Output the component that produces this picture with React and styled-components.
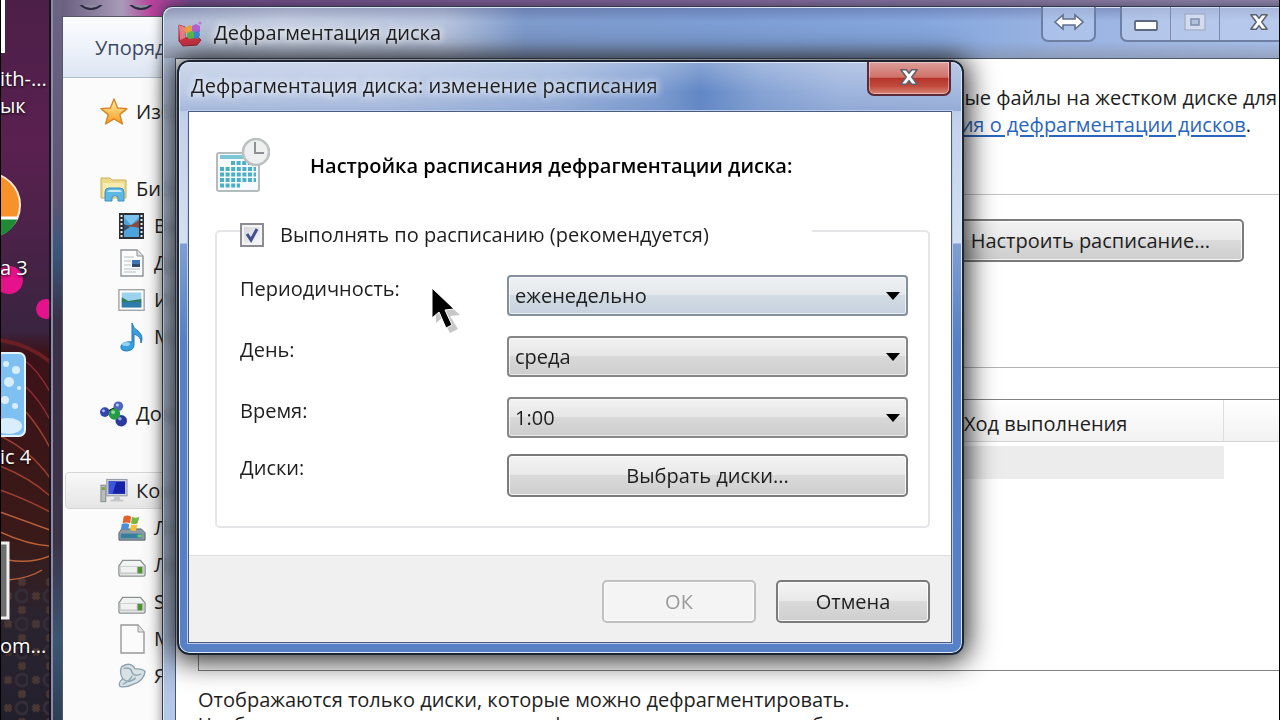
import { useState } from 'react';
import styled, { createGlobalStyle } from 'styled-components';

const days = ['понедельник', 'вторник', 'среда', 'четверг', 'пятница'];
const periods = ['ежедневно', 'еженедельно', 'ежемесячно'];
const times = ['0:00', '1:00', '2:00', '3:00'];

const StarIcon = () => (
  <svg width="28" height="28" viewBox="0 0 28 28">
    <defs>
      <linearGradient id="star" x1="0" y1="0" x2="0" y2="1">
        <stop offset="0" stopColor="#fff3a8" />
        <stop offset="1" stopColor="#f59a1c" />
      </linearGradient>
    </defs>
    <path
      d="M14 1 L17.6 10 L27 10.6 L19.8 16.6 L22.4 26 L14 20.8 L5.6 26 L8.2 16.6 L1 10.6 L10.4 10 Z"
      fill="url(#star)"
      stroke="#d98324"
      strokeWidth="1.4"
      strokeLinejoin="round"
    />
  </svg>
);

const LibraryIcon = () => (
  <svg width="28" height="28" viewBox="0 0 28 28">
    <path d="M1 3 h9 l2 2 h14 v18 h-25 z" fill="#ecd98a" stroke="#c9b25c" />
    <path d="M3 8 h21 v14 h-21 z" fill="#f7ebb0" />
    <path d="M5 26 v-9 q0 -4 4 -4 h11 q4 0 4 4 v9 h-6 v-4 q-3 -3 -6 0 v4 z" fill="#5fb8e4" stroke="#3c8fc4" />
    <path d="M7 17 q1 -2 3 -2 h9 q2 0 3 2 z" fill="#c7e9f8" />
  </svg>
);

const VideoIcon = () => (
  <svg width="28" height="28" viewBox="0 0 28 28">
    <rect x="1" y="1" width="25" height="26" fill="#2b2f36" />
    <rect x="6" y="3" width="15" height="22" fill="#4fa3dc" />
    <path d="M6 5 L13 13 L21 5 V3 H6 Z" fill="#7cc2ec" />
    <path d="M6 13 h15 l-7 2 z M12 14 l9 -6 v8 z" fill="#8a4a3c" />
    <path d="M6 12 l6 3 l-6 4 z" fill="#35506e" />
    <path d="M3.5 3 v23 M23.5 3 v23" stroke="#e8ecef" strokeWidth="2" strokeDasharray="2 2" />
  </svg>
);

const DocumentIcon = () => (
  <svg width="28" height="28" viewBox="0 0 28 28">
    <path d="M3 1 h16 l6 6 v20 h-22 z" fill="#fbfbfb" stroke="#8f9499" strokeWidth="1.4" />
    <path d="M19 1 v6 h6" fill="#dfe3e6" stroke="#8f9499" />
    <path d="M6 8 h10 M6 12 h7 M6 16 h7 M6 20 h16 M6 23 h12" stroke="#b4bcc9" />
    <rect x="14" y="11" width="8" height="7" fill="#3f77b5" />
    <rect x="14" y="15" width="8" height="3" fill="#2c4d6b" />
  </svg>
);

const PictureIcon = () => (
  <svg width="28" height="28" viewBox="0 0 30 28">
    <rect x="1" y="3" width="27" height="22" fill="#fdfdfd" stroke="#9a9fa4" strokeWidth="1.4" />
    <rect x="4" y="6" width="21" height="16" fill="#9bd2ee" />
    <path d="M4 11 l7 4 l14 -2 v4 h-21 z" fill="#2f7d58" />
    <path d="M4 16 h21 v6 h-21 z" fill="#2d7cab" />
  </svg>
);

const MusicIcon = () => (
  <svg width="28" height="30" viewBox="0 0 28 30">
    <path
      d="M14 1 q1 5 6 8 q6 5 3 12 q0 -7 -7 -9 v11 q0 5 -7 6 q-7 0 -6 -5 q2 -5 11 -4 z"
      fill="#38a0e0"
      stroke="#2479b4"
    />
    <ellipse cx="8" cy="22" rx="4" ry="2" fill="#92d3f5" />
  </svg>
);

const HomegroupIcon = () => (
  <svg width="28" height="28" viewBox="0 0 29 28">
    <path d="M5 12 L15 14 L19 5 M15 14 L22 21" stroke="#8ba8c4" strokeWidth="4" />
    <circle cx="5" cy="12" r="5" fill="#3445ad" />
    <circle cx="19" cy="6" r="5" fill="#4c67bd" />
    <circle cx="22" cy="21" r="6" fill="#2c3aa0" />
    <circle cx="15" cy="14" r="6" fill="#279a44" />
    <circle cx="3.6" cy="10.6" r="1.6" fill="#a9b6ee" />
    <circle cx="18" cy="4.6" r="1.6" fill="#bccdf2" />
    <circle cx="20.6" cy="19" r="1.8" fill="#97a4e6" />
    <circle cx="13.6" cy="12" r="2" fill="#93dca2" />
  </svg>
);

const ComputerIcon = () => (
  <svg width="28" height="28" viewBox="0 0 29 28">
    <rect x="1" y="8" width="5" height="17" fill="#b9bdb8" stroke="#85898a" />
    <rect x="2" y="10" width="3" height="3" fill="#79a63a" />
    <rect x="7" y="2" width="21" height="17" fill="#ced3da" stroke="#9096a0" />
    <rect x="9" y="4" width="17" height="13" fill="#1522a8" />
    <path d="M9 4 h8 l-4 13 h-4 z" fill="#3d55d8" />
    <path d="M15 19 h5 l1 4 h3 v2 h-13 v-2 h3 z" fill="#c3c7cb" />
  </svg>
);

const SystemDriveIcon = () => (
  <svg width="28" height="30" viewBox="0 0 30 30">
    <path d="M4 16 h21 l4 4 v8 h-28 v-8 z" fill="#8b9aa3" stroke="#56646c" />
    <rect x="3" y="21" width="22" height="5" fill="#377ea0" />
    <rect x="21" y="22" width="4" height="3" fill="#6bd06b" />
    <path d="M6 3 q4 -3 8 0 l-1 7 q-4 -2 -8 0 z" fill="#e2632b" />
    <path d="M15 3 q4 2 8 0 l-2 7 q-4 2 -7 0 z" fill="#7db544" />
    <path d="M4 11 q4 -2 8 0 l-1 6 q-4 -2 -8 0 z" fill="#4a8fd8" />
    <path d="M14 11 q3 2 7 0 l-2 7 q-3 1 -6 -1 z" fill="#f3c130" />
  </svg>
);

const DriveIcon = () => (
  <svg width="28" height="28" viewBox="0 0 30 28">
    <path d="M5 9 h19 l5 6 v9 q0 2 -2 2 h-24 q-2 0 -2 -2 v-9 z" fill="#f2f3f3" stroke="#8b8f90" strokeWidth="1.4" />
    <path d="M2 15 h26 v9 h-26 z" fill="#c9cccd" />
    <path d="M3 16 h17 v6 h-17 z" fill="#f1f1f1" />
    <rect x="21" y="16" width="5" height="7" fill="#4c9430" />
  </svg>
);

const FileIcon = () => (
  <svg width="28" height="30" viewBox="0 0 28 30">
    <path d="M3 1 h17 l6 7 v21 h-23 z" fill="#fbfbfb" stroke="#999" strokeWidth="1.4" />
    <path d="M20 1 v7 h6" fill="#e3e3e3" stroke="#999" />
  </svg>
);

const DishIcon = () => (
  <svg width="28" height="28" viewBox="0 0 30 28">
    <path d="M4 4 q10 -6 14 2 q8 0 11 3 q-1 10 -13 14 q-8 4 -14 2 q-2 -4 3 -8 q-4 -7 -1 -13 z" fill="#d7e1e6" stroke="#8ca0ab" strokeWidth="1.4" />
    <path d="M6 6 q8 -2 9 4 q1 5 10 2 M5 17 q6 6 14 -1 M5 23 q8 -4 10 -9" fill="none" stroke="#93a8b3" strokeWidth="1.6" />
  </svg>
);

const DefragIcon = () => (
  <svg width="26" height="26" viewBox="0 0 26 26">
    <path d="M1 4 l6 2 v11 l13 -1 l3 3 l-4 5 l-14 1 l-4 -5 z" fill="#cf3345" stroke="#9c2435" />
    <path d="M1 4 l6 2 v11 l-5 2 z" fill="#ea7d86" />
    <path d="M7 7 l5 -3 l3 2 v4 l-5 3 l-3 -2 z" fill="#e7a33b" />
    <path d="M14 5 l4 -2 l4 2 v6 l-5 1 l-3 -2 z" fill="#b55fd0" />
    <path d="M9 12 l5 -2 l3 2 v5 l-6 1 l-2 -2 z" fill="#59b94c" />
    <path d="M16 11 l5 -1 l1 4 l-2 4 l-4 -1 z" fill="#3f86cf" />
    <circle cx="22" cy="2" r="1.6" fill="#c471e0" />
  </svg>
);

const ScheduleIcon = () => (
  <svg width="54" height="54" viewBox="0 0 54 54">
    <rect x="1" y="15" width="42" height="38" rx="2" fill="#f6fafa" stroke="#b3bbbd" strokeWidth="2" />
    <rect x="4" y="17" width="36" height="4" fill="#7cc6d6" />
    <path d="M15 25 h24" stroke="#4bb0c6" strokeWidth="4" strokeDasharray="4 1.6" />
    <path d="M4 31 h36 M4 36.5 h36 M4 42 h36" stroke="#4bb0c6" strokeWidth="4" strokeDasharray="4 1.6" />
    <path d="M4 47.5 h20" stroke="#4bb0c6" strokeWidth="4" strokeDasharray="4 1.6" />
    <circle cx="40" cy="14" r="13" fill="#eef0f0" stroke="#bcc0c1" strokeWidth="2.6" />
    <path d="M39 4 v11 h9" fill="none" stroke="#8c9194" strokeWidth="2" />
  </svg>
);

const CrossIcon = () => (
  <svg width="20" height="18" viewBox="0 0 22 18">
    <path
      d="M2 1 h6 l3 4 l3 -4 h6 l-6 8 l6 8 h-6 l-3 -4 l-3 4 h-6 l6 -8 z"
      fill="#fff"
      stroke="#5b5f6c"
      strokeWidth="1.6"
      strokeLinejoin="round"
    />
  </svg>
);

const ArrowsIcon = () => (
  <svg width="30" height="18" viewBox="0 0 30 18">
    <path d="M1 9 l8 -7 v4 h12 v-4 l8 7 l-8 7 v-4 h-12 v4 z" fill="#fff" stroke="#63708a" strokeWidth="1.6" />
  </svg>
);

const MinimizeIcon = () => (
  <svg width="24" height="18" viewBox="0 0 24 18">
    <rect x="1" y="8" width="22" height="9" rx="1" fill="#fff" stroke="#5e6880" strokeWidth="1.8" />
  </svg>
);

const MaximizeIcon = () => (
  <svg width="22" height="18" viewBox="0 0 22 18">
    <rect x="1" y="1" width="20" height="16" fill="#d3dcee" stroke="#a3afc9" strokeWidth="1.4" />
    <rect x="7" y="6" width="8" height="6" fill="#b4c1dc" stroke="#8492b0" strokeWidth="1.6" />
  </svg>
);

const Wallpaper = () => (
  <WallpaperSvg width="50" height="720" viewBox="0 0 50 720">
    <defs>
      <linearGradient id="wall" x1="0" y1="0" x2="0" y2="1">
        <stop offset="0" stopColor="#4c1f48" />
        <stop offset="0.2" stopColor="#5a2050" />
        <stop offset="0.46" stopColor="#3a2440" />
        <stop offset="0.49" stopColor="#3c1218" />
        <stop offset="0.75" stopColor="#3a1a18" />
        <stop offset="0.86" stopColor="#2a2430" />
        <stop offset="1" stopColor="#221f2c" />
      </linearGradient>
      <pattern id="lace" width="28" height="28" patternUnits="userSpaceOnUse">
        <path d="M5 5 l6 6 M11 5 l-6 6 M19 19 l6 6 M25 19 l-6 6" stroke="#4a3632" strokeWidth="4" />
        <circle cx="22" cy="8" r="6" fill="none" stroke="#342c36" strokeWidth="3" />
      </pattern>
    </defs>
    <rect width="50" height="720" fill="url(#wall)" />
    <rect y="575" width="50" height="145" fill="url(#lace)" />
    <g fill="none" stroke="#9c4030" strokeWidth="1.5">
      <path d="M0 340 Q30 345 50 362" stroke="#6b1f22" strokeWidth="4" />
      <path d="M24 360 Q38 370 50 392 M24 385 Q40 400 50 420" stroke="#8c2c38" />
      <path d="M26 412 Q40 428 50 448 M0 436 Q30 450 50 478" />
      <path d="M0 466 Q30 478 50 496 M0 490 Q28 500 50 512" />
      <path d="M0 512 Q28 522 50 530 M0 532 Q28 545 50 546 M8 560 Q30 564 50 556 M8 580 Q30 578 42 570" stroke="#b8613a" />
    </g>
    <circle cx="9" cy="280" r="14" fill="#e6128c" />
    <circle cx="46" cy="309" r="10" fill="#e6128c" />
    <rect x="-20" y="-10" width="25" height="63" fill="#fff" />
    <circle cx="-12" cy="205" r="32" fill="#f7922a" stroke="#f3ead8" strokeWidth="2" />
    <path d="M0 218 H18 Q12 232 0 236 Z" fill="#1f8a34" />
    <path d="M0 218 H18" stroke="#fff" strokeWidth="3" />
    <rect x="-20" y="353" width="45" height="83" rx="6" fill="#7fc0f2" stroke="#e6f3fc" strokeWidth="2" />
    <g fill="#d9eefc">
      <circle cx="6" cy="364" r="3" />
      <circle cx="16" cy="370" r="4" />
      <circle cx="9" cy="382" r="5" />
      <circle cx="19" cy="388" r="2" />
      <circle cx="5" cy="400" r="4" />
      <circle cx="15" cy="406" r="3" />
      <ellipse cx="8" cy="426" rx="14" ry="8" />
    </g>
    <rect x="-20" y="543" width="28" height="75" fill="#6e6e6e" stroke="#efefef" strokeWidth="3" />
  </WallpaperSvg>
);

const Cursor = () => (
  <CursorSvg width="40" height="52" viewBox="0 0 40 52">
    <path d="M5 6 L5 36 L11 31 L19 46 L27 42 L19 29 L29 28 Z" fill="#000" opacity="0.22" />
    <path d="M1 1 V31 L8 25 L15 41 L21 38 L14 23 L23 22 Z" fill="#000" stroke="#fff" strokeWidth="1" />
  </CursorSvg>
);

const ExplorerWindow = () => (
  <Explorer>
    <ExplorerTop>
      <svg width="120" height="16" viewBox="0 0 120 16">
        <circle cx="29" cy="-11" r="15" fill="#8d8aa0" stroke="#2c2840" strokeWidth="2" />
        <circle cx="79" cy="-11" r="15" fill="#8d8aa0" stroke="#2c2840" strokeWidth="2" />
      </svg>
    </ExplorerTop>
    <ExplorerClient>
      <Toolbar>Упорядочить</Toolbar>
      <Nav>
        <NavGroup>
          <NavItem href="#fav"><StarIcon />Избранное</NavItem>
        </NavGroup>
        <NavGroup>
          <NavItem href="#lib"><LibraryIcon />Библиотеки</NavItem>
          <NavItem href="#video" $sub><VideoIcon />Видео</NavItem>
          <NavItem href="#docs" $sub><DocumentIcon />Документы</NavItem>
          <NavItem href="#pics" $sub><PictureIcon />Изображения</NavItem>
          <NavItem href="#music" $sub><MusicIcon />Музыка</NavItem>
        </NavGroup>
        <NavGroup>
          <NavItem href="#home"><HomegroupIcon />Домашняя группа</NavItem>
        </NavGroup>
        <NavGroup>
          <NavItem href="#pc" $active><ComputerIcon />Компьютер</NavItem>
          <NavItem href="#c" $sub><SystemDriveIcon />Локальный диск</NavItem>
          <NavItem href="#d" $sub><DriveIcon />Локальный диск</NavItem>
          <NavItem href="#s" $sub><DriveIcon />S</NavItem>
          <NavItem href="#m" $sub><FileIcon />M</NavItem>
          <NavItem href="#y" $sub><DishIcon />Я</NavItem>
        </NavGroup>
      </Nav>
    </ExplorerClient>
  </Explorer>
);

const DefragWindow = () => (
  <Defrag>
    <DefragTitlebar>
      <DefragIcon />
      <WindowTitle>Дефрагментация диска</WindowTitle>
      <GlassButton aria-label="Переместить"><ArrowsIcon /></GlassButton>
      <WindowControls>
        <ControlButton aria-label="Свернуть"><MinimizeIcon /></ControlButton>
        <ControlButton aria-label="Развернуть" disabled><MaximizeIcon /></ControlButton>
        <ControlButton aria-label="Закрыть" $wide><CrossIcon /></ControlButton>
      </WindowControls>
    </DefragTitlebar>
    <DefragBody>
      <Intro>
        <IntroLine>фрагментированные файлы на жестком диске для</IntroLine>
        <IntroLine $short>
          <a href="#more">сведения о дефрагментации дисков</a>.
        </IntroLine>
      </Intro>
      <Section>
        <Button>Настроить расписание...</Button>
      </Section>
      <ListSection>
        <DiskList>
          <thead>
            <tr>
              <NameHead />
              <ProgressHead>Ход выполнения</ProgressHead>
              <th />
            </tr>
          </thead>
          <tbody>
            <tr>
              <SelectedCell colSpan="2" />
              <td />
            </tr>
          </tbody>
        </DiskList>
      </ListSection>
      <Note>
        Отображаются только диски, которые можно дефрагментировать.
        <br />
        Чтобы определить, нуждается ли дефрагментация дисков, необходимо
      </Note>
    </DefragBody>
  </Defrag>
);

const Picker = ({ id, label, options, value, onChange, hot }) => (
  <Row>
    <RowLabel htmlFor={id}>{label}</RowLabel>
    <SelectBox>
      <Select id={id} value={value} $hot={hot} onChange={(e) => onChange(e.target.value)}>
        {options.map((ele) => (
          <option key={ele}>{ele}</option>
        ))}
      </Select>
    </SelectBox>
  </Row>
);

const ScheduleDialog = () => {
  const [enabled, setEnabled] = useState(true);
  const [period, setPeriod] = useState('еженедельно');
  const [day, setDay] = useState('среда');
  const [time, setTime] = useState('1:00');

  return (
    <Dialog role="dialog" aria-labelledby="dialog-title">
      <DialogTitlebar>
        <DialogTitle id="dialog-title">Дефрагментация диска: изменение расписания</DialogTitle>
        <CloseButton aria-label="Закрыть"><CrossIcon /></CloseButton>
      </DialogTitlebar>
      <DialogClient>
        <DialogMain>
          <DialogHeader>
            <ScheduleIcon />
            <h1>Настройка расписания дефрагментации диска:</h1>
          </DialogHeader>
          <Fieldset>
            <Legend>
              <Check>
                <CheckInput type="checkbox" checked={enabled} onChange={(e) => setEnabled(e.target.checked)} />
                Выполнять по расписанию (рекомендуется)
              </Check>
            </Legend>
            <Rows>
              <Picker id="period" label="Периодичность:" options={periods} value={period} onChange={setPeriod} hot />
              <Picker id="day" label="День:" options={days} value={day} onChange={setDay} />
              <Picker id="time" label="Время:" options={times} value={time} onChange={setTime} />
            </Rows>
            <Row>
              <RowLabel htmlFor="disks">Диски:</RowLabel>
              <Button id="disks">Выбрать диски...</Button>
            </Row>
          </Fieldset>
        </DialogMain>
        <DialogFooter>
          <Button disabled>ОК</Button>
          <Button>Отмена</Button>
        </DialogFooter>
      </DialogClient>
    </Dialog>
  );
};

const App = () => (
  <Desktop>
    <GlobalStyle />
    <Wallpaper />
    <Shortcuts>
      <Shortcut>ith-...<br />ык</Shortcut>
      <Shortcut>а 3</Shortcut>
      <Shortcut>ic 4</Shortcut>
      <Shortcut>om...</Shortcut>
    </Shortcuts>
    <ExplorerWindow />
    <DefragWindow />
    <ScheduleDialog />
    <Cursor />
  </Desktop>
);

const GlobalStyle = createGlobalStyle`
  * {
    box-sizing: border-box;
  }
  body {
    margin: 0;
    font-family: 'Open Sans', 'Noto Sans', sans-serif;
    font-size: 20px;
    line-height: 27px;
    color: #1e1e1e;
  }
  button, select {
    font: inherit;
    color: inherit;
  }
`;

const Desktop = styled.main`
  position: relative;
  height: 100vh;
  overflow: hidden;
  background: #2a2430;
  &::after {
    content: '';
    position: absolute;
    inset: 0;
    border: solid #000;
    border-width: 0 1px;
    pointer-events: none;
  }
`;
const WallpaperSvg = styled.svg`
  position: absolute;
  left: 0;
  top: 0;
`;
const Shortcuts = styled.div`
  position: relative;
  display: flex;
  flex-direction: column;
  gap: 162px;
  padding-top: 65px;
`;
const Shortcut = styled.div`
  color: #fff;
  text-shadow: 0 1px 3px #000;
  &:first-child {
    margin-bottom: -27px;
  }
`;

const Explorer = styled.section`
  position: absolute;
  left: 49px;
  right: 0;
  top: 0;
  bottom: -12px;
  display: flex;
  flex-direction: column;
  padding-left: 11px;
  border-left: 2px solid #15141f;
  background: linear-gradient(#6b6584, #5c5474 200px, #39587c 250px, #3a3048 320px, #3c3448 540px, #3b5672 640px, #2a3c52);
  box-shadow: inset 2px 0 0 #8f8aa3;
`;
const ExplorerTop = styled.div`
  height: 16px;
  overflow: hidden;
  background: linear-gradient(90deg, #6a5f80, #a79bb8 60px, #b8409a 90px, #6e4a86 130px, #8e86ac);
`;
const ExplorerClient = styled.div`
  flex: 1;
  border: solid #555668;
  border-width: 1px 0 0 1px;
  background: #fbfbfb;
`;
const Toolbar = styled.div`
  padding: 17px 32px 16px;
  color: #3e4a63;
  border-bottom: 1px solid #b3bfd0;
  background: linear-gradient(#fbfcfe, #eef3fa 50%, #dce5f2);
`;
const Nav = styled.nav`
  display: flex;
  flex-direction: column;
  gap: 40px;
  padding: 15px 0 0 2px;
`;
const NavGroup = styled.div`
  display: flex;
  flex-direction: column;
`;
const NavItem = styled.a`
  display: flex;
  align-items: center;
  gap: 8px;
  height: 37px;
  padding-left: ${({ $sub }) => ($sub ? 52 : 34)}px;
  color: #1e1e1e;
  text-decoration: none;
  white-space: nowrap;
  border: 1px solid ${({ $active }) => ($active ? '#d6d6d6' : 'transparent')};
  border-radius: 4px;
  background: ${({ $active }) => ($active ? 'linear-gradient(#f8f8f8, #e6e6e6)' : 'none')};
  svg {
    flex: none;
  }
`;

const Defrag = styled.section`
  position: absolute;
  left: 162px;
  right: -36px;
  top: 6px;
  bottom: -60px;
  display: flex;
  flex-direction: column;
  padding: 0 12px;
  border: 1px solid #30384a;
  border-radius: 10px 10px 0 0;
  background: linear-gradient(rgba(172, 190, 220, 0.85), rgba(150, 165, 185, 0.8) 240px, rgba(138, 155, 178, 0.85) 560px, #b4c8ea 700px);
  backdrop-filter: blur(4px);
  box-shadow: inset 1px 1px 0 #e3ebf7, 0 0 12px rgba(0, 0, 0, 0.45);
`;
const DefragTitlebar = styled.header`
  display: flex;
  align-items: flex-start;
  height: 51px;
  margin: 0 -11px;
  padding: 0 14px;
  border-radius: 9px 9px 0 0;
  background:
    linear-gradient(rgba(60, 60, 110, 0.3), rgba(255, 255, 255, 0) 14px, rgba(255, 255, 255, 0) 34px, rgba(130, 135, 150, 0.5)),
    linear-gradient(90deg, #adb9d2, #c3cde0 120px, #b6c3dd 280px, #7d9acb 360px, #7c9dd4 560px, #85a6dd 760px, #9ab4e2 900px, #a9c0ea);
  box-shadow: inset 0 1px 0 #d8e2f2;
  > svg {
    margin-top: 14px;
  }
`;
const WindowTitle = styled.h2`
  flex: 1;
  margin: 12px 0 0 10px;
  font-size: 20px;
  font-weight: 400;
  text-shadow: 0 0 8px #fff, 0 0 8px #fff;
`;
const GlassButton = styled.button`
  width: 55px;
  height: 35px;
  margin-right: 24px;
  padding: 0;
  border: 2px solid #6d7fa3;
  border-top: none;
  border-radius: 0 0 7px 7px;
  background: rgba(190, 208, 240, 0.5);
`;
const WindowControls = styled.div`
  display: flex;
  height: 35px;
  border: 2px solid #6d7fa3;
  border-top: none;
  border-radius: 0 0 7px 7px;
  background: rgba(200, 214, 240, 0.5);
`;
const ControlButton = styled.button`
  width: ${({ $wide }) => ($wide ? 78 : 49)}px;
  padding: 0;
  border: none;
  border-right: ${({ $wide }) => ($wide ? 'none' : '1px solid #7d8cac')};
  background: none;
`;
const DefragBody = styled.div`
  flex: 1;
  padding: 25px 0 0 22px;
  border: solid #4a566c;
  border-width: 1px 0 0 1px;
  background: #fff;
`;
const Intro = styled.div`
  display: flex;
  flex-direction: column;
  align-items: flex-end;
  padding-bottom: 56px;
`;
const IntroLine = styled.div`
  padding-right: ${({ $short }) => ($short ? 52 : 26)}px;
  white-space: nowrap;
  a {
    color: #2a66bd;
    text-underline-offset: 3px;
  }
`;
const Section = styled.div`
  display: flex;
  justify-content: flex-end;
  height: 173px;
  padding: 24px 59px 0 0;
  border-top: 1px solid #c4c4c4;
`;
const ListSection = styled.div`
  padding-top: 31px;
  border-top: 1px solid #b4b4b4;
`;
const DiskList = styled.table`
  display: block;
  width: 100%;
  height: 272px;
  border: 1px solid #828282;
  border-spacing: 0;
  table-layout: fixed;
  background: #fff;
  th {
    height: 42px;
    padding: 6px 0 0;
    font-weight: 400;
    text-align: left;
    border-bottom: 1px solid #d5d5d5;
    background: linear-gradient(#fff, #f2f2f3);
  }
  th:last-child {
    width: 100%;
  }
  td {
    height: 37px;
    padding: 0;
  }
`;
const NameHead = styled.th`
  min-width: 765px;
`;
const ProgressHead = styled.th`
  min-width: 260px;
  border-right: 1px solid #dedede;
`;
const SelectedCell = styled.td`
  border-top: 4px solid #fff;
  background: #ececec;
`;
const Note = styled.p`
  margin: 0;
  padding-top: 16px;
  line-height: 25px;
  white-space: nowrap;
`;

const Dialog = styled.section`
  position: absolute;
  left: 177px;
  right: 316px;
  top: 60px;
  padding: 0 10px 10px 9px;
  border: 2px solid #1d2535;
  border-radius: 12px;
  background: linear-gradient(#9fb5db, #c3d2ea 60px, #d3e0f3 181px, #7f9fd2 182px, #5580c4 280px, #5681c6);
  box-shadow: inset 0 0 0 1px #dbe6f7, 0 2px 28px 4px rgba(0, 0, 0, 0.85);
`;
const DialogTitlebar = styled.header`
  display: flex;
  align-items: flex-start;
  justify-content: space-between;
  height: 49px;
  margin: 0 -9px 0 -8px;
  padding: 0 10px 0 11px;
  border-radius: 9px 9px 0 0;
  background:
    linear-gradient(rgba(255, 255, 255, 0.25), rgba(255, 255, 255, 0) 30px, rgba(110, 140, 195, 0.3)),
    linear-gradient(90deg, #bccae5, #b9c8e4 200px, #9eb5dc 380px, #7c9bd0 480px, #6187c5 520px, #86a3d5 580px, #9fb5dd 660px, #a4b9de);
  box-shadow: inset 0 1px 0 #dbe6f7;
`;
const DialogTitle = styled.h2`
  margin: 10px 0 0;
  font-size: 20px;
  font-weight: 400;
  text-shadow: 0 0 8px #fff, 0 0 8px #dfe8f6;
`;
const CloseButton = styled.button`
  width: 84px;
  height: 34px;
  padding: 0;
  border: 2px solid #5c2a38;
  border-top: none;
  border-radius: 0 0 7px 7px;
  background: linear-gradient(#dd9f9b, #cf7168 48%, #b5322a 50%, #c04a3c 75%, #d98578);
  box-shadow: inset 0 0 0 1px rgba(255, 255, 255, 0.4);
`;
const DialogClient = styled.div`
  border: 1px solid #4a5c80;
  background: #fff;
  box-shadow: 0 0 0 1px #b9cceb;
`;
const DialogMain = styled.div`
  padding: 26px 21px 27px 27px;
`;
const DialogHeader = styled.div`
  display: flex;
  align-items: center;
  gap: 40px;
  margin-bottom: 21px;
  h1 {
    margin: 0;
    font-size: 20px;
    font-weight: 600;
    color: #000;
  }
`;
const Fieldset = styled.fieldset`
  margin: 0 0 0 -1px;
  padding: 27px 20px 29px 23px;
  border: 2px solid #e6e6e8;
  border-radius: 5px;
`;
const Legend = styled.legend`
  width: 572px;
  padding: 8px 0 0;
`;
const Check = styled.label`
  display: flex;
  align-items: center;
  gap: 16px;
`;
const CheckInput = styled.input`
  appearance: none;
  width: 24px;
  height: 24px;
  margin: 0;
  border: 2px solid #8b8d92;
  background: linear-gradient(135deg, #d4d7dd, #fafafa);
  box-shadow: inset 0 0 0 2px #f4f4f4;
  &:checked {
    background: url("data:image/svg+xml,%3Csvg xmlns='http://www.w3.org/2000/svg' viewBox='0 0 20 20'%3E%3Cpath d='M5 9 L9 15 L15 4' fill='none' stroke='%23434f8f' stroke-width='3'/%3E%3C/svg%3E"),
      linear-gradient(135deg, #d0d3da, #fafafa);
  }
`;
const Rows = styled.div`
  display: flex;
  flex-direction: column;
  gap: 20px;
  margin-bottom: 16px;
`;
const Row = styled.div`
  display: grid;
  grid-template-columns: 267px 1fr;
`;
const RowLabel = styled.label``;
const SelectBox = styled.div`
  position: relative;
  &::after {
    content: '';
    position: absolute;
    right: 8px;
    top: 17px;
    border: 7px solid transparent;
    border-top: 8px solid #000;
    border-bottom: none;
    pointer-events: none;
  }
`;
const Select = styled.select`
  display: block;
  appearance: none;
  width: 100%;
  height: 41px;
  padding: 0 6px;
  border: 2px solid ${({ $hot }) => ($hot ? '#84919c' : '#868686')};
  border-radius: 4px;
  background: ${({ $hot }) =>
    $hot
      ? 'linear-gradient(#eff1f3, #e4e8ec 48%, #d3dce4 50%, #c6d2de)'
      : 'linear-gradient(#f2f2f2, #e6e6e6 48%, #d9d9d9 50%, #cdcdcd)'};
  box-shadow: inset 0 0 0 1px rgba(255, 255, 255, 0.6);
`;
const Button = styled.button`
  height: 43px;
  padding: 0 32px;
  border: 2px solid #7b7b7b;
  border-radius: 5px;
  background: linear-gradient(#f3f3f3, #e9e9e9 48%, #dadada 50%, #cecece);
  box-shadow: inset 0 0 0 1px rgba(255, 255, 255, 0.8);
  white-space: nowrap;
  &:disabled {
    color: #9a9a9a;
    border-color: #bfc0c1;
    background: #f4f4f4;
  }
`;
const DialogFooter = styled.footer`
  display: flex;
  justify-content: flex-end;
  gap: 20px;
  padding: 24px 21px 19px;
  border-top: 1px solid #dfdfdf;
  background: #f0f0f0;
  ${Button} {
    width: 154px;
  }
`;

const CursorSvg = styled.svg`
  position: absolute;
  left: 431px;
  top: 287px;
`;

export default App;
